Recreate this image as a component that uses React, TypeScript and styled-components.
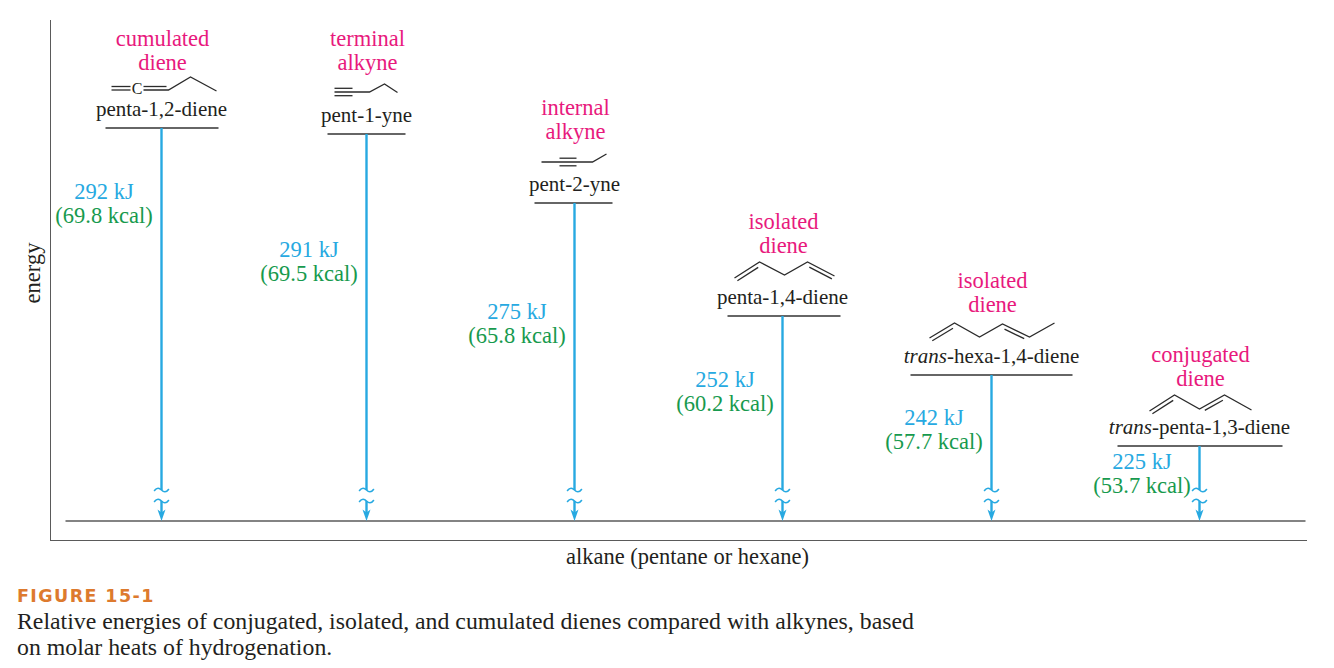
import styled, { createGlobalStyle } from 'styled-components';

const GlobalStyle = createGlobalStyle`
  html, body {
    margin: 0;
    padding: 0;
    background: #ffffff;
  }
  body {
    font-family: 'Liberation Serif', 'Times New Roman', serif;
    color: #231f20;
  }
`;

const PINK = '#e8197d';
const BLUE = '#27a9e1';
const GREEN = '#179a4e';
const INK = '#231f20';
const AXIS = '#5a5a5a';

type P = [number, number];

interface Compound {
  x: number;
  level: number;
  left: number;
  right: number;
  kind: string[];
  kindY: number;
  name: string;
  italic?: string;
  kj: string;
  kcal: string;
  kjY: number;
  mol: string[];
  atom?: { x: number; y: number; label: string };
}

// zigzag skeleton as one path
const zig = (pts: P[]) => 'M' + pts.map((p) => p.join(',')).join(' L');

// inner line of a double bond, offset to the lower side of the bond
const inner = (a: P, b: P, trimA = 1, trimB = 4, d = 3.8) => {
  const dx = b[0] - a[0];
  const dy = b[1] - a[1];
  const len = Math.hypot(dx, dy);
  const ux = dx / len;
  const uy = dy / len;
  let nx = -uy;
  let ny = ux;
  if (ny < 0) {
    nx = -nx;
    ny = -ny;
  }
  const s = [a[0] + nx * d + ux * trimA, a[1] + ny * d + uy * trimA];
  const e = [b[0] + nx * d - ux * trimB, b[1] + ny * d - uy * trimB];
  return `M${s[0].toFixed(1)},${s[1].toFixed(1)} L${e[0].toFixed(1)},${e[1].toFixed(1)}`;
};

const p14: P[] = [[735, 278], [760, 262], [785, 275], [808, 262], [835, 276]];
const h14: P[] = [[930, 338], [955, 323], [980, 337], [1003, 324], [1030, 337], [1055, 323]];
const p13: P[] = [[1150, 411], [1175, 395], [1200, 409], [1225, 395], [1252, 410]];

const compounds: Compound[] = [
  {
    x: 162,
    level: 128,
    left: 106,
    right: 219,
    kind: ['cumulated', 'diene'],
    kindY: 46,
    name: 'penta-1,2-diene',
    kj: '292 kJ',
    kcal: '(69.8 kcal)',
    kjY: 198.5,
    mol: ['M112,86.5 H131', 'M112,90 H131', 'M144,86.5 H167', 'M144,90 H169 L191,77 L217,91'],
    atom: { x: 137.5, y: 94, label: 'C' },
  },
  {
    x: 367,
    level: 134,
    left: 328,
    right: 406,
    kind: ['terminal', 'alkyne'],
    kindY: 46,
    name: 'pent-1-yne',
    kj: '291 kJ',
    kcal: '(69.5 kcal)',
    kjY: 256.5,
    mol: ['M335,88.3 H353', 'M335,92 H370 L385,84 L398,92.5', 'M335,95.7 H353'],
  },
  {
    x: 575,
    level: 203,
    left: 535,
    right: 613,
    kind: ['internal', 'alkyne'],
    kindY: 115,
    name: 'pent-2-yne',
    kj: '275 kJ',
    kcal: '(65.8 kcal)',
    kjY: 318.5,
    mol: ['M542,162 H593 L607,154', 'M560,158.2 H577', 'M560,165.8 H577'],
  },
  {
    x: 783,
    level: 316,
    left: 728,
    right: 841,
    kind: ['isolated', 'diene'],
    kindY: 229,
    name: 'penta-1,4-diene',
    kj: '252 kJ',
    kcal: '(60.2 kcal)',
    kjY: 386.5,
    mol: [zig(p14), inner(p14[0], p14[1], 1, 4), inner(p14[3], p14[4], 4, 1)],
  },
  {
    x: 992,
    level: 375,
    left: 911,
    right: 1073,
    kind: ['isolated', 'diene'],
    kindY: 288,
    italic: 'trans',
    name: '-hexa-1,4-diene',
    kj: '242 kJ',
    kcal: '(57.7 kcal)',
    kjY: 424.5,
    mol: [zig(h14), inner(h14[0], h14[1], 1, 4), inner(h14[3], h14[4], 4, 4)],
  },
  {
    x: 1200,
    level: 446,
    left: 1118,
    right: 1283,
    kind: ['conjugated', 'diene'],
    kindY: 362,
    italic: 'trans',
    name: '-penta-1,3-diene',
    kj: '225 kJ',
    kcal: '(53.7 kcal)',
    kjY: 468.5,
    mol: [zig(p13), inner(p13[0], p13[1], 1, 4), inner(p13[2], p13[3], 4, 4)],
  },
];

const BASE_Y = 521;

const Page = styled.main`
  width: 1334px;
  height: 668px;
  padding-top: 20px;
  box-sizing: border-box;
  overflow: hidden;
`;

const ChartRow = styled.div`
  display: flex;
  height: 521px;
`;

const YAxisLabel = styled.div`
  flex: none;
  width: 50px;
  box-sizing: border-box;
  padding: 0 0 16px 16px;
  display: flex;
  align-items: center;
  justify-content: center;
  font-size: 22.5px;

  span {
    display: block;
    white-space: nowrap;
    transform: rotate(-90deg);
  }
`;

const Plot = styled.div`
  flex: none;
  width: 1257px;
  height: 521px;
  box-sizing: border-box;
  border-left: 1.5px solid ${AXIS};
  border-bottom: 1.5px solid ${AXIS};
`;

const ChartSvg = styled.svg`
  display: block;
  overflow: visible;
  font-family: 'Liberation Serif', 'Times New Roman', serif;
`;

const Kind = styled.text`
  fill: ${PINK};
  font-size: 22.5px;
  text-anchor: middle;
`;

const Name = styled.text`
  fill: ${INK};
  font-size: 21px;
  text-anchor: middle;
`;

const Atom = styled.text`
  fill: ${INK};
  font-size: 16px;
  text-anchor: middle;
`;

const Energy = styled.text<{ $tone: string }>`
  fill: ${(p) => p.$tone};
  font-size: 22.5px;
  text-anchor: middle;
`;

const Bond = styled.path`
  fill: none;
  stroke: #2b2b2b;
  stroke-width: 1.3;
  stroke-linejoin: miter;
`;

const LevelLine = styled.line`
  stroke: #333333;
  stroke-width: 1.6;
`;

const BaseLine = styled.line`
  stroke: ${AXIS};
  stroke-width: 1.6;
`;

const ArrowStroke = styled.path`
  fill: none;
  stroke: ${BLUE};
  stroke-width: 2.4;
  stroke-linecap: butt;
`;

const ArrowBreak = styled.path`
  fill: none;
  stroke: ${BLUE};
  stroke-width: 1.6;
  stroke-linecap: round;
`;

const ArrowHead = styled.path`
  fill: ${BLUE};
`;

const XAxisLabel = styled.div`
  margin: 4px 0 0 50px;
  padding-left: 18px;
  width: 1257px;
  box-sizing: border-box;
  text-align: center;
  font-size: 22.5px;
  line-height: 24px;
`;

const Caption = styled.figcaption`
  margin: 16px 0 0 17px;
`;

const FigureTitle = styled.div`
  font-family: 'DejaVu Sans', 'Liberation Sans', sans-serif;
  font-weight: 700;
  font-size: 17.5px;
  line-height: 22px;
  letter-spacing: 1.4px;
  color: #dd7a2e;
`;

const CaptionText = styled.p`
  margin: 1px 0 0;
  font-size: 23.8px;
  line-height: 26px;
  color: ${INK};
`;

function tilde(x: number, y: number) {
  return `M${x - 7},${y + 0.5} C${x - 4.5},${y - 3} ${x - 2},${y - 2} ${x},${y} C${x + 2},${y + 2} ${x + 4.5},${y + 3} ${x + 7},${y - 0.5}`;
}

function Column({ c }: { c: Compound }) {
  const ex = c.x - 57.5;
  return (
    <g>
      <Kind x={c.x + 1} y={c.kindY}>
        {c.kind[0]}
      </Kind>
      <Kind x={c.x + 1} y={c.kindY + 24}>
        {c.kind[1]}
      </Kind>
      {c.mol.map((d) => (
        <Bond key={d} d={d} />
      ))}
      {c.atom && (
        <Atom x={c.atom.x} y={c.atom.y}>
          {c.atom.label}
        </Atom>
      )}
      <Name x={c.x} y={c.level - 12}>
        {c.italic && <tspan fontStyle="italic">{c.italic}</tspan>}
        {c.name}
      </Name>
      <LevelLine x1={c.left} x2={c.right} y1={c.level} y2={c.level} />

      <Energy $tone={BLUE} x={ex} y={c.kjY}>
        {c.kj}
      </Energy>
      <Energy $tone={GREEN} x={ex} y={c.kjY + 24}>
        {c.kcal}
      </Energy>

      <ArrowStroke d={`M${c.x},${c.level} V490`} />
      <ArrowBreak d={tilde(c.x, 490)} />
      <ArrowBreak d={tilde(c.x, 501)} />
      <ArrowStroke d={`M${c.x},501 V513`} />
      <ArrowHead d={`M${c.x - 4},509.5 L${c.x},${BASE_Y} L${c.x + 4},509.5 L${c.x},512.5 Z`} />
    </g>
  );
}

export default function App() {
  return (
    <>
      <GlobalStyle />
      <Page>
        <figure style={{ margin: 0 }}>
          <ChartRow>
            <YAxisLabel>
              <span>energy</span>
            </YAxisLabel>
            <Plot>
              <ChartSvg width={1255.5} height={519.5} viewBox="51.5 20 1255.5 519.5">
                <BaseLine x1={66} x2={1306} y1={BASE_Y} y2={BASE_Y} />
                {compounds.map((c) => (
                  <Column key={c.x} c={c} />
                ))}
              </ChartSvg>
            </Plot>
          </ChartRow>
          <XAxisLabel>alkane (pentane or hexane)</XAxisLabel>
          <Caption>
            <FigureTitle>FIGURE 15-1</FigureTitle>
            <CaptionText>
              Relative energies of conjugated, isolated, and cumulated dienes compared with alkynes, based
              <br />
              on molar heats of hydrogenation.
            </CaptionText>
          </Caption>
        </figure>
      </Page>
    </>
  );
}
